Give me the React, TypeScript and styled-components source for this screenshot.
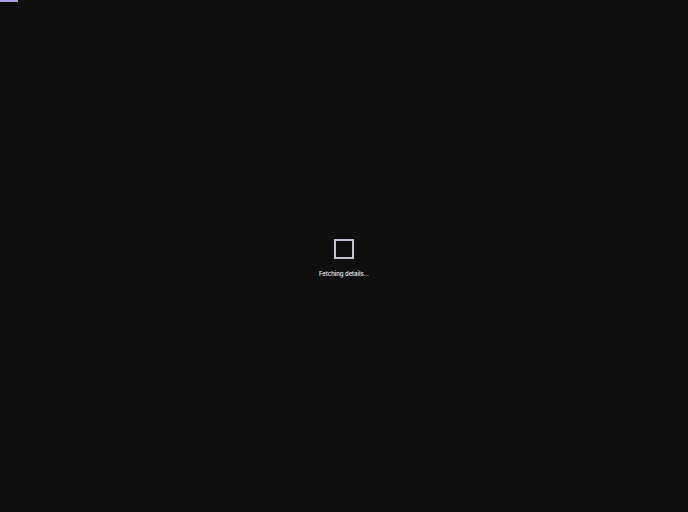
import React from 'react';
import styled, { createGlobalStyle } from 'styled-components';

const GlobalStyle = createGlobalStyle`
  html, body, #root {
    margin: 0;
    height: 100%;
  }

  body {
    background: #0f0f10;
    font-family: Inter, "Noto Sans", sans-serif;
  }
`;

const Page = styled.div`
  position: relative;
  height: 100%;
  display: flex;
  flex-direction: column;
  align-items: center;
  justify-content: center;
`;

const Progress = styled.div<{ $value: number }>`
  position: absolute;
  top: 0;
  left: 0;
  height: 2px;
  width: ${(p) => p.$value}%;
  background: #a99fe0;
`;

const Spinner = styled.div`
  width: 16px;
  height: 16px;
  border: 2px solid #c4c2d4;
  margin-top: 4px;
`;

const Label = styled.p`
  margin: 10px 0 0;
  font-size: 6px;
  font-weight: 500;
  letter-spacing: -0.05px;
  line-height: 9px;
  color: #f2f2f2;
`;

const App = () => (
  <>
    <GlobalStyle />
    <Page>
      <Progress $value={2.6} />
      <Spinner />
      <Label>Fetching details...</Label>
    </Page>
  </>
);

export default App;
